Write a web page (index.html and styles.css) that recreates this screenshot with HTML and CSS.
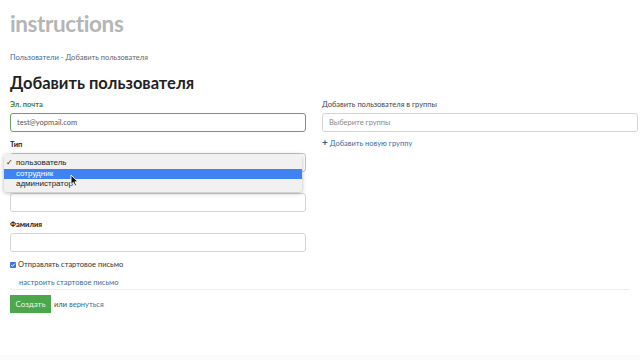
FILE: index.html
```html
<!DOCTYPE html>
<html lang="ru">
<head>
    <meta charset="UTF-8">
    <meta name="viewport" content="width=device-width, initial-scale=1.0">
    <title>Добавить пользователя</title>
    <link rel="stylesheet" href="styles.css">
</head>
<body>
    <div class="page-title">instructions</div>

    <div class="breadcrumb">
        <a href="#">Пользователи</a> - <span>Добавить пользователя</span>
    </div>

    <h1>Добавить пользователя</h1>

    <form class="user-form">
        <div class="col-left">
            <div class="field">
                <label class="label-ok">Эл. почта</label>
                <div class="input input-ok">test@yopmail.com</div>
            </div>

            <div class="field">
                <label>Тип</label>
                <div class="select-wrap">
                    <div class="input select">
                        <span>пользователь</span>
                        <span class="arrows">&#x25B4;<br>&#x25BE;</span>
                    </div>
                    <!-- open dropdown menu -->
                    <ul class="menu">
                        <li class="checked"><span class="check">&#x2713;</span>пользователь</li>
                        <li class="hover">сотрудник</li>
                        <li>администратор</li>
                    </ul>
                    <svg class="cursor" width="9" height="13" viewBox="0 0 9 13">
                        <path d="M1 1 L1 10.5 L3.3 8.4 L5 12 L6.6 11.3 L4.9 7.8 L8 7.8 Z" fill="#111" stroke="#fff" stroke-width="0.9"/>
                    </svg>
                </div>
            </div>

            <div class="field">
                <label>Имя</label>
                <div class="input"></div>
            </div>

            <div class="field">
                <label>Фамилия</label>
                <div class="input"></div>
            </div>

            <div class="check-row">
                <span class="checkbox">
                    <svg width="6" height="6" viewBox="0 0 6 6"><path d="M1.2 3 L2.5 4.3 L4.8 1.6" fill="none" stroke="#fff" stroke-width="1"/></svg>
                </span>
                Отправлять стартовое письмо
            </div>

            <a class="letter-link" href="#">настроить стартовое письмо</a>
        </div>

        <div class="col-right">
            <div class="field">
                <label class="label-plain">Добавить пользователя в группы</label>
                <div class="input placeholder">Выберите группы</div>
            </div>
            <a class="add-group" href="#"><span class="plus">+</span> Добавить новую группу</a>
        </div>
    </form>

    <div class="actions">
        <button type="button" class="btn-create">Создать</button>
        <span>или <a href="#">вернуться</a></span>
    </div>

    <div class="footer-strip"></div>
</body>
</html>
```

FILE: styles.css
```css
body {
    font-family: Lato, "Open Sans", sans-serif;
    background-color: #fff;
    color: #333;
    margin: 0;
    padding: 0 2px 0 10px;
    height: 360px;
    box-sizing: border-box;
    position: relative;
    overflow: hidden;
}

a {
    color: #3a6e9c;
    text-decoration: none;
}

.page-title {
    font-size: 22.5px;
    font-weight: bold;
    color: #b5b5b5;
    line-height: 28px;
    margin-top: 10px;
    letter-spacing: -0.4px;
}

.breadcrumb {
    font-size: 7.5px;
    color: #666;
    line-height: 10px;
    margin-top: 15px;
}

h1 {
    font-size: 16.5px;
    color: #222;
    margin: 10px 0 0;
    line-height: 20px;
}

.user-form {
    display: grid;
    grid-template-columns: 296px 1fr;
    column-gap: 16px;
    margin-top: 7px;
}

.field {
    display: flex;
    flex-direction: column;
    margin-bottom: 8px;
}

label {
    font-size: 7.5px;
    font-weight: bold;
    color: #222;
    line-height: 10px;
    margin-bottom: 3px;
}

.label-ok {
    color: #3f7d37;
}

.label-plain {
    font-weight: normal;
    color: #444;
}

.input {
    height: 19px;
    box-sizing: border-box;
    border: 1px solid #d4d4d4;
    border-radius: 3px;
    font-size: 7.5px;
    color: #555;
    padding: 0 6px;
    display: flex;
    align-items: center;
    background: #fff;
}

.input-ok {
    border-color: #6aa15f;
}

.placeholder {
    color: #888;
}

.select-wrap {
    position: relative;
}

.select {
    justify-content: space-between;
    border-color: #b9c7d8;
}

.arrows {
    font-size: 5px;
    line-height: 3px;
    color: #333;
    text-align: center;
    margin-right: -3px;
}

.menu {
    position: absolute;
    top: 1px;
    left: -6px;
    width: 298px;
    margin: 0;
    padding: 4px 0 2px;
    list-style: none;
    background: #f1f1f1;
    border-radius: 3px;
    box-shadow: 0 1px 4px rgba(0, 0, 0, 0.3);
    font-family: "Liberation Sans", Arial, sans-serif;
    font-size: 8px;
    color: #222;
}

.menu li {
    height: 10.5px;
    line-height: 10.5px;
    padding-left: 12px;
    position: relative;
}

.menu li.hover {
    background: #3f83f2;
    color: #fff;
}

.menu .check {
    position: absolute;
    left: 2px;
    font-size: 8px;
}

.cursor {
    position: absolute;
    left: 60px;
    top: 21px;
}

.check-row {
    font-size: 7.5px;
    color: #333;
    line-height: 10px;
    display: flex;
    align-items: center;
    gap: 2px;
}

.checkbox {
    width: 6px;
    height: 6px;
    background: #3a74d4;
    border-radius: 1px;
    display: inline-flex;
}

.letter-link {
    display: block;
    font-size: 7.5px;
    line-height: 10px;
    margin: 8px 0 0 9px;
}

.add-group {
    font-size: 7.5px;
    line-height: 10px;
    margin-top: -3px;
    display: block;
}

.plus {
    font-weight: bold;
    font-size: 10px;
    color: #2c5a86;
}

.actions {
    border-top: 1px solid #eee;
    margin-top: 1px;
    margin-right: 8px;
    padding-top: 5px;
    display: flex;
    align-items: center;
    gap: 3px;
    font-size: 7.5px;
    color: #444;
}

.btn-create {
    background-color: #4ca64c;
    color: #eaf6ea;
    border: none;
    font-family: inherit;
    font-size: 8px;
    height: 18px;
    width: 41px;
    padding: 0;
}

.footer-strip {
    position: absolute;
    left: 0;
    right: 0;
    bottom: 0;
    height: 5px;
    background: #fafafa;
}
```
